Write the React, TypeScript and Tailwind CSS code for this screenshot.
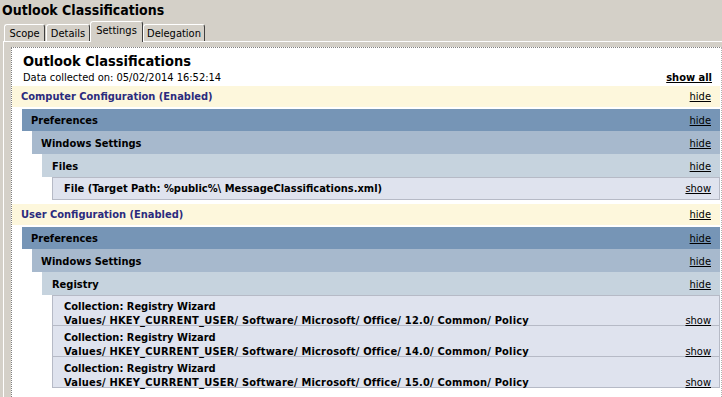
import React from 'react';

type TabProps = {
  label: string;
  width: string;
  active?: boolean;
};

function Tab({ label, width, active }: TabProps) {
  if (active) {
    return (
      <div className={`relative z-10 -mb-px h-[21px] pt-[1px] text-center bg-[#d4d0c8] border-t border-l border-white border-r border-r-[#404040] rounded-t-[3px] text-[11px] leading-[16px] ${width}`}>
        {label}
      </div>
    );
  }
  return (
    <div className={`h-[17px] pt-[1px] text-center border-t border-l border-white border-r border-r-[#404040] rounded-t-[3px] text-[11px] leading-[15px] ${width}`}>
      {label}
    </div>
  );
}

type BarProps = {
  label: string;
  depth: 0 | 1 | 2 | 3;
  link?: string;
};

const barStyles = {
  0: 'h-[21px] pt-[2px] bg-[#fdf7dc] text-[#2b2b7e] pl-[9px]',
  1: 'ml-[10px] h-[22px] pt-[3px] bg-[#7695b6] pl-[9px]',
  2: 'ml-[20px] h-[23px] pt-[3px] bg-[#a7b9cd] pl-[9px]',
  3: 'ml-[30px] h-[23px] pt-[3px] bg-[#c6d3de] pl-[10px]',
};

function Bar({ label, depth, link = 'hide' }: BarProps) {
  return (
    <div className={`flex items-center justify-between pr-[9px] font-bold text-[11px] ${barStyles[depth]}`}>
      <span>{label}</span>
      <span className="font-normal text-black underline">{link}</span>
    </div>
  );
}

function Item({ lines, first }: { lines: string[]; first?: boolean }) {
  const tall = lines.length > 1;
  if (!tall) {
    return (
      <div className="ml-[40px] h-[23px] pt-[1px] flex items-center justify-between bg-[#dfe3ee] border border-[#b6bac6] pl-[11px] pr-[8px] text-[11px]">
        <span className="font-bold">{lines[0]}</span>
        <span className="underline">show</span>
      </div>
    );
  }
  return (
    <div
      className={`ml-[40px] h-[31px] flex items-start justify-between bg-[#dfe3ee] border-x border-b border-[#b6bac6] pl-[11px] pr-[8px] text-[11px] leading-[14px] ${
        first ? 'border-t pt-[4px]' : 'pt-[5px]'
      }`}
    >
      <div className="font-bold">
        <div>{lines[0]}</div>
        <div className="tracking-[0.2px]">{lines[1]}</div>
      </div>
      <span className="mt-[14px] underline">show</span>
    </div>
  );
}

export default function App() {
  return (
    <div className="w-[722px] h-[397px] overflow-hidden bg-[#d4d0c8] text-black font-['Tahoma','DejaVu_Sans_Condensed','Liberation_Sans',sans-serif]">
      <div className="h-[21px] pl-[2px] pt-[1px] text-[14px] leading-[18px] font-bold">
        Outlook Classifications
      </div>

      {/* Tabs */}
      <div className="flex items-end h-[20px] pl-[4px]">
        <div className="mr-[1px]">
          <Tab label="Scope" width="w-[41px]" />
        </div>
        <Tab label="Details" width="w-[44px]" />
        <Tab label="Settings" width="w-[53px]" active />
        <Tab label="Delegation" width="w-[62px]" />
      </div>

      {/* Tab panel */}
      <div className="ml-[3px] h-[356px] border-t border-l border-white pl-[7px] pt-[5px]">
        <div className="h-full bg-white border-t border-l border-[#808080] border-r border-r-[#b0b0b0] border-dotted pr-[1px]">
          <div className="pl-[11px] pt-[4px] h-[22px] text-[14.5px] leading-[18px] font-bold">
            Outlook Classifications
          </div>
          <div className="flex items-center justify-between h-[16px] pl-[11px] pr-[8px] text-[11px]">
            <span>Data collected on: 05/02/2014 16:52:14</span>
            <span className="font-bold underline">show all</span>
          </div>

          <Bar label="Computer Configuration (Enabled)" depth={0} />
          <div className="h-[2px]" />
          <Bar label="Preferences" depth={1} />
          <Bar label="Windows Settings" depth={2} />
          <Bar label="Files" depth={3} />
          <Item first lines={['File (Target Path: %public%\\ MessageClassifications.xml)']} />

          <div className="h-[4px]" />
          <Bar label="User Configuration (Enabled)" depth={0} />
          <div className="h-[2px]" />
          <Bar label="Preferences" depth={1} />
          <Bar label="Windows Settings" depth={2} />
          <Bar label="Registry" depth={3} />
          <Item
            first
            lines={[
              'Collection: Registry Wizard',
              'Values/ HKEY_CURRENT_USER/ Software/ Microsoft/ Office/ 12.0/ Common/ Policy',
            ]}
          />
          <Item
            lines={[
              'Collection: Registry Wizard',
              'Values/ HKEY_CURRENT_USER/ Software/ Microsoft/ Office/ 14.0/ Common/ Policy',
            ]}
          />
          <Item
            lines={[
              'Collection: Registry Wizard',
              'Values/ HKEY_CURRENT_USER/ Software/ Microsoft/ Office/ 15.0/ Common/ Policy',
            ]}
          />
        </div>
      </div>
    </div>
  );
}
